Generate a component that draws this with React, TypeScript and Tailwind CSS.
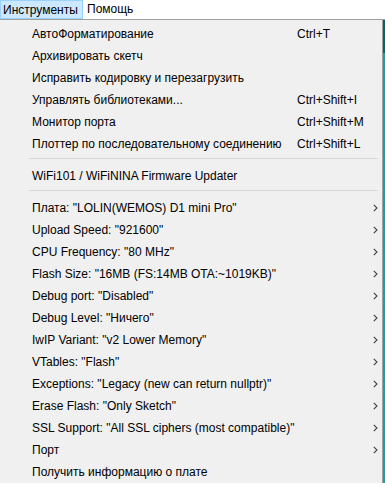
import React from "react";

type Item =
  | { kind: "item"; label: string; shortcut?: string; sub?: boolean }
  | { kind: "sep" };

const items: Item[] = [
  { kind: "item", label: "АвтоФорматирование", shortcut: "Ctrl+T" },
  { kind: "item", label: "Архивировать скетч" },
  { kind: "item", label: "Исправить кодировку и перезагрузить" },
  { kind: "item", label: "Управлять библиотеками...", shortcut: "Ctrl+Shift+I" },
  { kind: "item", label: "Монитор порта", shortcut: "Ctrl+Shift+M" },
  { kind: "item", label: "Плоттер по последовательному соединению", shortcut: "Ctrl+Shift+L" },
  { kind: "sep" },
  { kind: "item", label: "WiFi101 / WiFiNINA Firmware Updater" },
  { kind: "sep" },
  { kind: "item", label: 'Плата: "LOLIN(WEMOS) D1 mini Pro"', sub: true },
  { kind: "item", label: 'Upload Speed: "921600"', sub: true },
  { kind: "item", label: 'CPU Frequency: "80 MHz"', sub: true },
  { kind: "item", label: 'Flash Size: "16MB (FS:14MB OTA:~1019KB)"', sub: true },
  { kind: "item", label: 'Debug port: "Disabled"', sub: true },
  { kind: "item", label: 'Debug Level: "Ничего"', sub: true },
  { kind: "item", label: 'IwIP Variant: "v2 Lower Memory"', sub: true },
  { kind: "item", label: 'VTables: "Flash"', sub: true },
  { kind: "item", label: 'Exceptions: "Legacy (new can return nullptr)"', sub: true },
  { kind: "item", label: 'Erase Flash: "Only Sketch"', sub: true },
  { kind: "item", label: 'SSL Support: "All SSL ciphers (most compatible)"', sub: true },
  { kind: "item", label: "Порт", sub: true },
  { kind: "item", label: "Получить информацию о плате" },
];

function Chevron() {
  return (
    <svg width="5" height="8" viewBox="0 0 5 8" className="block">
      <path d="M0.8 0.8 L4 4 L0.8 7.2" fill="none" stroke="#404040" strokeWidth="1.1" />
    </svg>
  );
}

export default function App() {
  return (
    <div
      className="w-[385px] h-[486px] overflow-hidden bg-white text-black text-[12px]"
      style={{ fontFamily: '"Liberation Sans", Arial, sans-serif' }}
    >
      {/* menu bar */}
      <div className="flex h-[19px] bg-white leading-[18px]">
        <div className="w-[83px] h-[19px] bg-[#cce8ff] border border-[#99d1ff] pl-[2px] whitespace-nowrap">
          Инструменты
        </div>
        <div className="pl-[4px] whitespace-nowrap">Помощь</div>
      </div>
      <div className="h-px bg-[#a0a0a0]" />
      <div className="flex">
        <div className="w-[382px] bg-[#f0f0f0] pt-[3px]">
          {items.map((it, i) =>
            it.kind === "sep" ? (
              <div key={i} className="h-[10px] pt-[3px] pl-[29px] pr-[4px]">
                <div className="h-px bg-[#d7d7d7]" />
              </div>
            ) : (
              <div key={i} className="flex items-center h-[22px] leading-[22px] whitespace-nowrap">
                <div className="w-[32px] shrink-0" />
                <div className="w-[265px] shrink-0">{it.label}</div>
                <div className="w-[76px] shrink-0">{it.shortcut ?? ""}</div>
                <div className="w-[5px] shrink-0 flex items-center">{it.sub ? <Chevron /> : null}</div>
              </div>
            )
          )}
        </div>
        <div className="w-px bg-[#a0a0a0] self-stretch" />
        <div className="w-[2px] flex flex-col">
          <div className="h-[33px] bg-[#006468]" />
          <div className="flex-1 bg-[#17a1a5]" />
        </div>
      </div>
    </div>
  );
}
